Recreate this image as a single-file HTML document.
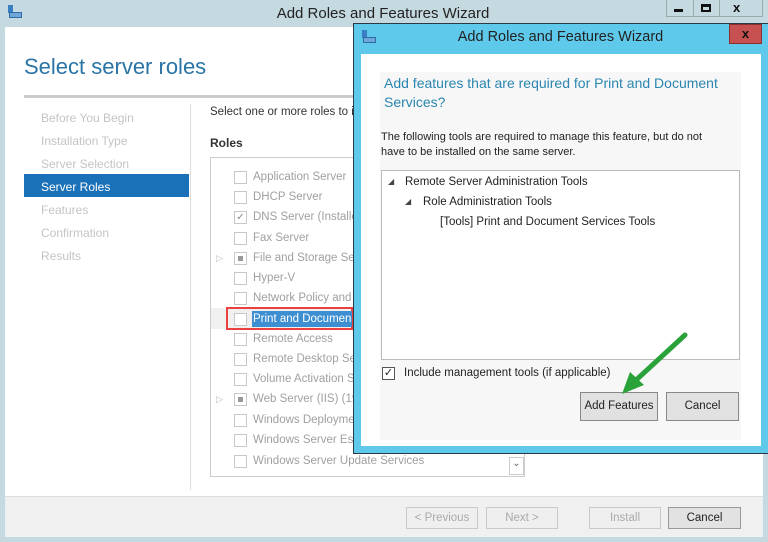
<!DOCTYPE html>
<html><head><style>
*{margin:0;padding:0;box-sizing:border-box}
body{width:768px;height:542px;overflow:hidden;background:#c5d9e0;font-family:"Liberation Sans",sans-serif;position:relative;font-size:11.5px;color:#333}
.a{position:absolute}
.cb{position:absolute;width:13px;height:13px;border:1px solid #c8c8c8;background:#fff}
.role{position:absolute;left:253px;color:#a0a0a0;font-size:11.5px;white-space:nowrap}
.nav{position:absolute;left:41px;color:#c4c4c4;font-size:12px}
.btn{position:absolute;border:1px solid #c9c9c9;background:#efefef;color:#aaa;font-size:11.5px;text-align:center;line-height:20px}
</style></head><body>
<div class="a" style="left:8px;top:5px;width:14px;height:14px"><div class="a" style="left:0;top:0;width:5px;height:8px;background:#3a7fc4"></div><div class="a" style="left:1px;top:7px;width:13px;height:6px;background:#6fa8d8;border:1px solid #2e6ba8"></div></div>
<div class="a" style="left:0;top:5px;width:766px;text-align:center;font-size:15px;color:#222">Add Roles and Features Wizard</div>
<div class="a" style="left:666px;top:0;width:97px;height:17px;border:1px solid #9aa;border-top:none;background:#c5d9e0"></div>
<div class="a" style="left:693px;top:0;width:1px;height:17px;background:#9aa"></div>
<div class="a" style="left:719px;top:0;width:1px;height:17px;background:#9aa"></div>
<div class="a" style="left:674px;top:9px;width:9px;height:3px;background:#111"></div>
<div class="a" style="left:701px;top:4px;width:10px;height:8px;border:2px solid #111;border-top-width:3px"></div>
<div class="a" style="left:733px;top:0;font-size:13px;font-weight:bold;color:#111">x</div>
<div class="a" style="left:5px;top:27px;width:758px;height:469px;background:#fff"></div>
<div class="a" style="left:5px;top:496px;width:758px;height:41px;background:#f0f0f0;border-top:1px solid #ddd"></div>
<div class="a" style="left:24px;top:54px;font-size:22px;color:#2b74a6">Select server roles</div>
<div class="a" style="left:24px;top:95px;width:340px;height:3px;background:#ccc"></div>
<div class="a" style="left:190px;top:104px;width:1px;height:386px;background:#ddd"></div>
<div class="nav" style="top:111px">Before You Begin</div>
<div class="nav" style="top:134px">Installation Type</div>
<div class="nav" style="top:157px">Server Selection</div>
<div class="a" style="left:24px;top:174px;width:165px;height:23px;background:#1a71b8"></div>
<div class="nav" style="top:180px;color:#fff">Server Roles</div>
<div class="nav" style="top:203px">Features</div>
<div class="nav" style="top:226px">Confirmation</div>
<div class="nav" style="top:249px">Results</div>
<div class="a" style="left:210px;top:106px;font-size:11.5px;color:#333">Select one or more roles to i</div>
<div class="a" style="left:210px;top:136px;font-size:12px;color:#333;font-weight:bold">Roles</div>
<div class="a" style="left:210px;top:157px;width:315px;height:320px;border:1px solid #ccc;background:#fff"></div>
<div class="a" style="left:211px;top:308px;width:142px;height:21px;background:#f0f0f0"></div>
<div class="a" style="left:226px;top:307px;width:127px;height:23px;border:2px solid #e8413f"></div>
<div class="a" style="left:252px;top:311px;width:100px;height:16px;background:#3d8fd1"></div>
<div class="a" style="left:509px;top:457px;width:15px;height:18px;border:1px solid #ccc;background:#fff;color:#666;font-size:10px;text-align:center">&#8964;</div>
<div class="cb" style="left:234px;top:171px"></div><div class="role" style="top:171px">Application Server</div>
<div class="cb" style="left:234px;top:191px"></div><div class="role" style="top:191px">DHCP Server</div>
<div class="cb" style="left:234px;top:211px;color:#888;font-size:10px;line-height:11px;text-align:center">&#10003;</div><div class="role" style="top:211px">DNS Server (Installe</div>
<div class="cb" style="left:234px;top:232px"></div><div class="role" style="top:232px">Fax Server</div>
<div class="a" style="left:216px;top:253px;color:#bbb;font-size:9px">&#9655;</div>
<div class="cb" style="left:234px;top:252px"><div class="a" style="left:3px;top:3px;width:5px;height:5px;background:#999"></div></div><div class="role" style="top:252px">File and Storage Ser</div>
<div class="cb" style="left:234px;top:272px"></div><div class="role" style="top:272px">Hyper-V</div>
<div class="cb" style="left:234px;top:292px"></div><div class="role" style="top:292px">Network Policy and</div>
<div class="cb" style="left:234px;top:313px"></div><div class="role" style="top:313px;color:#fff">Print and Documen</div>
<div class="cb" style="left:234px;top:333px"></div><div class="role" style="top:333px">Remote Access</div>
<div class="cb" style="left:234px;top:353px"></div><div class="role" style="top:353px">Remote Desktop Se</div>
<div class="cb" style="left:234px;top:373px"></div><div class="role" style="top:373px">Volume Activation S</div>
<div class="a" style="left:216px;top:394px;color:#bbb;font-size:9px">&#9655;</div>
<div class="cb" style="left:234px;top:393px"><div class="a" style="left:3px;top:3px;width:5px;height:5px;background:#999"></div></div><div class="role" style="top:393px">Web Server (IIS) (19</div>
<div class="cb" style="left:234px;top:414px"></div><div class="role" style="top:414px">Windows Deployme</div>
<div class="cb" style="left:234px;top:434px"></div><div class="role" style="top:434px">Windows Server Ess</div>
<div class="cb" style="left:234px;top:455px"></div><div class="role" style="top:455px">Windows Server Update Services</div>
<div class="btn" style="left:406px;top:507px;width:72px;height:22px">&lt; Previous</div>
<div class="btn" style="left:486px;top:507px;width:72px;height:22px">Next &gt;</div>
<div class="btn" style="left:589px;top:507px;width:72px;height:22px">Install</div>
<div class="btn" style="left:668px;top:507px;width:73px;height:22px;color:#222;border-color:#999;background:#e2e2e2">Cancel</div>
<div class="a" style="left:353px;top:23px;width:430px;height:431px;background:#5ec9ea;border:1px solid #2a3a44"></div>
<div class="a" style="left:362px;top:30px;width:14px;height:14px"><div class="a" style="left:0;top:0;width:5px;height:8px;background:#3a7fc4"></div><div class="a" style="left:1px;top:7px;width:13px;height:6px;background:#6fa8d8;border:1px solid #2e6ba8"></div></div>
<div class="a" style="left:353px;top:29px;width:415px;text-align:center;font-size:14.5px;color:#222">Add Roles and Features Wizard</div>
<div class="a" style="left:729px;top:24px;width:33px;height:20px;background:#c75050;border:1px solid #8a3030;color:#111;font-weight:bold;text-align:center;font-size:13px;line-height:17px">x</div>
<div class="a" style="left:361px;top:54px;width:400px;height:392px;background:#fff"></div>
<div class="a" style="left:380px;top:72px;width:361px;height:368px;background:#f7f7f7"></div>
<div class="a" style="left:384px;top:74px;font-size:14px;color:#2a86b0;line-height:19px;width:360px">Add features that are required for Print and Document Services?</div>
<div class="a" style="left:381px;top:130px;font-size:11px;color:#222;line-height:15px;width:340px">The following tools are required to manage this feature, but do not have to be installed on the same server.</div>
<div class="a" style="left:381px;top:170px;width:359px;height:190px;background:#fff;border:1px solid #bbb"></div>
<div class="a" style="left:388px;top:177px;font-size:8px;color:#444">&#9698;</div>
<div class="a" style="left:405px;top:176px;font-size:11.5px;color:#222">Remote Server Administration Tools</div>
<div class="a" style="left:405px;top:197px;font-size:8px;color:#444">&#9698;</div>
<div class="a" style="left:423px;top:196px;font-size:11.5px;color:#222">Role Administration Tools</div>
<div class="a" style="left:440px;top:216px;font-size:11.5px;color:#222">[Tools] Print and Document Services Tools</div>
<div class="cb" style="left:382px;top:367px;border-color:#555;color:#222;font-size:11px;line-height:11px;text-align:center">&#10003;</div>
<div class="a" style="left:404px;top:367px;font-size:11.5px;color:#222">Include management tools (if applicable)</div>
<div class="btn" style="left:580px;top:392px;width:78px;height:29px;line-height:27px;color:#222;border-color:#888;background:#e1e1e1">Add Features</div>
<div class="btn" style="left:666px;top:392px;width:73px;height:29px;line-height:27px;color:#222;border-color:#888;background:#e1e1e1">Cancel</div>
<svg class="a" style="left:600px;top:325px" width="100" height="80"><line x1="85" y1="10" x2="34" y2="57" stroke="#2aa23a" stroke-width="5" stroke-linecap="round"/><polygon points="22,69 30,47 44,60" fill="#2aa23a"/></svg>
</body></html>
